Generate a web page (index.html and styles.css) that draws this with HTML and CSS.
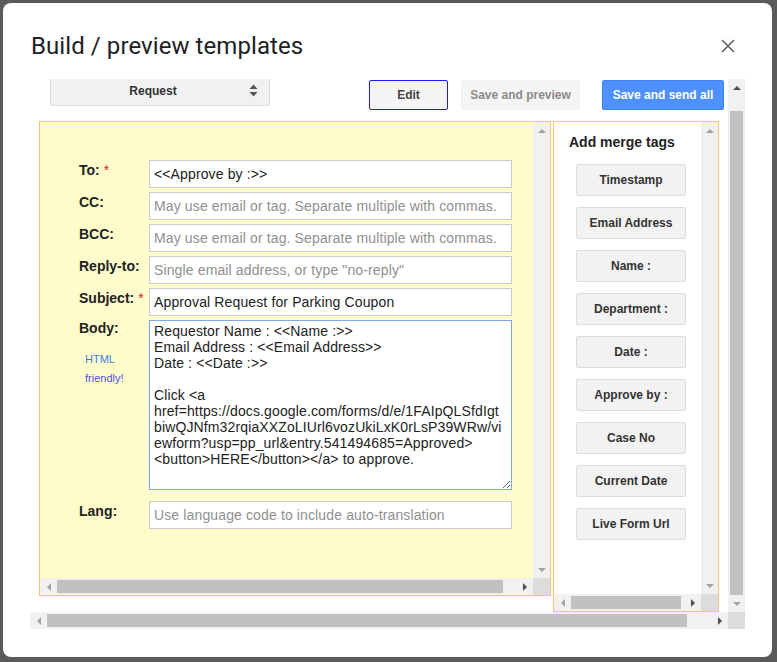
FILE: index.html
```html
<!DOCTYPE html>
<html lang="en">
<head>
<meta charset="utf-8">
<title>Build / preview templates</title>
<link rel="stylesheet" href="styles.css">
</head>
<body>
<div class="dialog">
  <div class="header">
    <h1 class="title">Build / preview templates</h1>
    <button class="close" aria-label="Close">
      <svg width="14" height="14" viewBox="0 0 14 14"><path d="M1 1L13 13M13 1L1 13" stroke="#5f6368" stroke-width="1.6" fill="none"/></svg>
    </button>
  </div>
  <div class="frame">
    <div class="viewport">
      <div class="scroller">
        <div class="toolbar">
          <div class="select"><span class="select-text">Request</span>
            <svg width="9" height="13" viewBox="0 0 9 13"><path d="M4.5 0.5L8.5 5H0.5Z M4.5 12.5L8.5 8H0.5Z" fill="#555"/></svg>
          </div>
          <button class="btn edit">Edit</button>
          <button class="btn preview">Save and preview</button>
          <button class="btn send">Save and send all</button>
        </div>
        <div class="panels">
          <div class="panel editor">
            <div class="pane yellow">
              <div class="form">
                <div class="lbl">To: <span class="req">*</span></div>
                <input class="field" value="&lt;&lt;Approve by :&gt;&gt;">
                <div class="lbl">CC:</div>
                <input class="field" placeholder="May use email or tag. Separate multiple with commas.">
                <div class="lbl">BCC:</div>
                <input class="field" placeholder="May use email or tag. Separate multiple with commas.">
                <div class="lbl">Reply-to:</div>
                <input class="field" placeholder="Single email address, or type &quot;no-reply&quot;">
                <div class="lbl">Subject: <span class="req">*</span></div>
                <input class="field" value="Approval Request for Parking Coupon">
                <div class="lbl body-lbl">Body:
                  <div class="helper"><span class="h-a">HTML</span><span class="h-b">friendly!</span></div>
                </div>
                <textarea class="field body-area">Requestor Name : &lt;&lt;Name :&gt;&gt;
Email Address : &lt;&lt;Email Address&gt;&gt;
Date : &lt;&lt;Date :&gt;&gt;

Click &lt;a href=https://docs.google.com/forms/d/e/1FAIpQLSfdIgtbiwQJNfm32rqiaXXZoLIUrl6vozUkiLxK0rLsP39WRw/viewform?usp=pp_url&amp;entry.541494685=Approved&gt;&lt;button&gt;HERE&lt;/button&gt;&lt;/a&gt; to approve.</textarea>
                <div class="lbl gap">Lang:</div>
                <input class="field gap" placeholder="Use language code to include auto-translation">
              </div>
            </div>
            <div class="vbar"><span class="ab"><i class="tri up"></i></span><span class="vtrack"></span><span class="ab"><i class="tri down"></i></span></div>
            <div class="hbar"><span class="ab"><i class="tri left"></i></span><span class="htrack"><span class="hthumb w-yellow"></span></span><span class="ab dark"><i class="tri right"></i></span></div>
            <div class="corner"></div>
          </div>
          <div class="panel tags">
            <div class="pane white">
              <div class="tags-title">Add merge tags</div>
              <button class="tag">Timestamp</button>
              <button class="tag">Email Address</button>
              <button class="tag">Name :</button>
              <button class="tag">Department :</button>
              <button class="tag">Date :</button>
              <button class="tag">Approve by :</button>
              <button class="tag">Case No</button>
              <button class="tag">Current Date</button>
              <button class="tag">Live Form Url</button>
            </div>
            <div class="vbar"><span class="ab"><i class="tri up"></i></span><span class="vtrack"></span><span class="ab"><i class="tri down"></i></span></div>
            <div class="hbar"><span class="ab"><i class="tri left"></i></span><span class="htrack"><span class="hthumb w-tags"></span></span><span class="ab dark"><i class="tri right"></i></span></div>
            <div class="corner"></div>
          </div>
        </div>
      </div>
    </div>
    <div class="vbar"><span class="ab dark"><i class="tri up"></i></span><span class="vtrack end"><span class="vthumb"></span></span><span class="ab"><i class="tri down"></i></span></div>
    <div class="hbar"><span class="ab"><i class="tri left"></i></span><span class="htrack"><span class="hthumb w-outer"></span></span><span class="ab dark"><i class="tri right"></i></span></div>
    <div class="corner"></div>
  </div>
</div>
</body>
</html>
```
FILE: styles.css
```css
* { box-sizing: border-box; }
html, body { margin: 0; }
body {
  width: 777px;
  height: 662px;
  overflow: hidden;
  background: #5a5a5a;
  padding: 3px 0 0 3px;
  font-family: "Liberation Sans", Arial, sans-serif;
}
.dialog {
  width: 769px;
  height: 654px;
  background: #fff;
  border-radius: 8px;
}
.header {
  display: flex;
  align-items: center;
  justify-content: space-between;
  height: 59px;
  padding: 27px 37px 0 28px;
}
.title {
  margin: 0;
  font: 400 24px/32px Roboto, sans-serif;
  color: #202124;
  letter-spacing: 0.08px;
}
.close {
  width: 14px;
  height: 14px;
  padding: 0;
  border: none;
  background: none;
  display: flex;
}
.frame {
  margin: 17px 0 0 27px;
  width: 715px;
  height: 550px;
  display: grid;
  grid-template-columns: 698px 17px;
  grid-template-rows: 533px 17px;
}
.viewport { overflow: hidden; }
.scroller { margin-top: -4px; }
.toolbar {
  display: flex;
  align-items: flex-start;
  height: 35px;
}
.select {
  margin-left: 20px;
  width: 220px;
  height: 31px;
  display: flex;
  align-items: center;
  background: #f1f1f1;
  border: 1px solid #dadada;
  border-radius: 2px;
  padding-right: 11px;
  font: bold 12px "Liberation Sans", Arial, sans-serif;
  color: #333;
}
.select-text { flex: 1; text-align: center; padding-left: 6px; }
.btn {
  height: 30px;
  margin-top: 5px;
  padding: 0;
  border-radius: 2px;
  font: bold 12px "Liberation Sans", Arial, sans-serif;
}
.edit {
  margin-left: 99px;
  width: 79px;
  background: #f5f5f5;
  border: 1px solid #1a1aff;
  color: #444;
}
.preview {
  margin-left: 13px;
  width: 119px;
  background: #f5f5f5;
  border: 1px solid #f1f1f1;
  color: #8a8a8a;
}
.send {
  margin-left: 22px;
  width: 122px;
  background: #4d90fe;
  border: 1px solid #3d82f6;
  color: #fff;
}
.panels {
  display: flex;
  align-items: flex-start;
  gap: 2px;
  margin-top: 11px;
  padding-left: 9px;
}
.panel {
  flex: none;
  display: grid;
  border: 1px solid #f7c66f;
}
.editor {
  width: 512px;
  height: 475px;
  grid-template-columns: 493px 17px;
  grid-template-rows: 456px 17px;
}
.tags {
  width: 166px;
  height: 491px;
  grid-template-columns: 147px 17px;
  grid-template-rows: 472px 17px;
}
.pane { overflow: hidden; }
.yellow {
  background: #fffccc;
  padding: 38px 0 0 39px;
}
.form {
  display: grid;
  grid-template-columns: 70px 363px;
  row-gap: 4px;
  align-items: start;
}
.lbl {
  font: bold 14px/16px "Liberation Sans", Arial, sans-serif;
  color: #222;
  padding-top: 2px;
  white-space: nowrap;
}
.body-lbl { padding-top: 0; }
.req { color: #e0241b; font-weight: normal; }
.helper {
  margin-top: 14px;
  padding-left: 6px;
  font: 11px/19px "Liberation Sans", Arial, sans-serif;
}
.h-a { display: block; color: #3f7be6; }
.h-b { display: block; color: #4e4fd3; }
.field {
  width: 363px;
  height: 28px;
  margin: 0;
  border: 1px solid #cbcbcb;
  background: #fff;
  padding: 0 4px;
  font: 14px "Liberation Sans", Arial, sans-serif;
  letter-spacing: 0.13px;
  color: #222;
  outline: none;
}
.field::placeholder { color: #8f8f8f; }
.body-area {
  height: 170px;
  border-color: #80a8e6;
  padding: 2px 7px 2px 4px;
  line-height: normal;
  resize: both;
  overflow: hidden;
}
.gap { margin-top: 7px; }
.white {
  background: #fff;
  padding: 12px 0 0 15px;
}
.tags-title {
  font: bold 14px/16px "Liberation Sans", Arial, sans-serif;
  color: #222;
  margin-bottom: 14px;
  white-space: nowrap;
}
.tag {
  display: block;
  width: 110px;
  height: 32px;
  margin: 0 0 11px 7px;
  padding: 0;
  background: #f2f2f2;
  border: 1px solid #dcdcdc;
  border-radius: 2px;
  font: bold 12px "Liberation Sans", Arial, sans-serif;
  color: #333;
}
/* fake scrollbars */
.vbar { display: flex; flex-direction: column; background: #f1f1f1; }
.hbar { display: flex; background: #f1f1f1; }
.ab {
  flex: none;
  width: 17px;
  height: 17px;
  display: flex;
  align-items: center;
  justify-content: center;
  color: #a3a3a3;
}
.ab.dark { color: #505050; }
.tri { display: block; width: 0; height: 0; border: 4px solid transparent; }
.tri.up { border-top-width: 0; border-bottom-color: currentColor; }
.tri.down { border-bottom-width: 0; border-top-color: currentColor; }
.tri.left { border-left-width: 0; border-right-color: currentColor; }
.tri.right { border-right-width: 0; border-left-color: currentColor; }
.vtrack { flex: 1; display: flex; flex-direction: column; }
.vtrack.end { justify-content: flex-end; }
.vthumb { height: 484px; margin: 0 2px; background: #c1c1c1; }
.htrack { flex: 1; display: flex; }
.hthumb { height: 13px; margin: 2px 0; background: #c1c1c1; }
.w-outer { width: 640px; }
.w-yellow { width: 446px; }
.w-tags { width: 110px; }
.corner { background: #dcdcdc; }
```
